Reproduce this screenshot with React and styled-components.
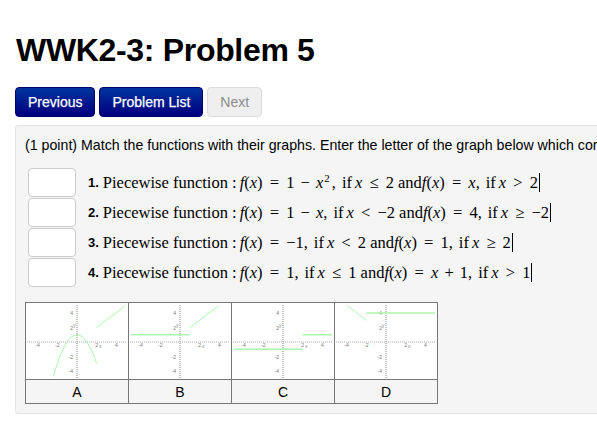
import React from 'react'
import styled, { createGlobalStyle } from 'styled-components'

const GlobalStyle = createGlobalStyle`
  html, body {
    margin: 0;
    padding: 0;
    background: #fff;
    overflow: hidden;
  }
  body {
    font-family: "Liberation Sans", Arial, sans-serif;
    color: #000;
  }
`

const Page = styled.div`
  width: 597px;
  height: 424px;
  overflow: hidden;
  padding: 33px 0 0 15px;
  box-sizing: border-box;
`

const Title = styled.h1`
  margin: 0 0 20px 1px;
  font-size: 32px;
  line-height: 34px;
  font-weight: 700;
  letter-spacing: -0.32px;
`

const Nav = styled.div`
  display: flex;
  gap: 4px;
  margin-bottom: 8px;
`

const NavButton = styled.a`
  display: block;
  box-sizing: border-box;
  height: 30px;
  padding: 0 12px;
  line-height: 28px;
  font-size: 14px;
  border-radius: 4px;
  border: 1px solid ${p => (p.$disabled ? '#dcdcdc' : '#00006e')};
  color: ${p => (p.$disabled ? '#8c8c8c' : '#fff')};
  background: ${p => (p.$disabled ? '#efefef' : 'linear-gradient(#00339c, #00007f)')};
  -webkit-text-stroke: ${p => (p.$disabled ? '0' : '0.25px #fff')};
`

const Panel = styled.div`
  box-sizing: border-box;
  width: 640px;
  height: 289px;
  padding: 11px 9px;
  background: #f5f5f5;
  border: 1px solid #e3e3e3;
  border-radius: 3px;
`

const Prompt = styled.div`
  font-size: 14.2px;
  line-height: 17px;
  white-space: nowrap;
  margin-bottom: 14px;
`

const Rows = styled.div`
  display: flex;
  flex-direction: column;
  gap: 1px;
  margin: 0 0 15px 3px;
`

const Row = styled.div`
  display: flex;
  align-items: center;
  height: 29px;
`

const AnswerBox = styled.div`
  box-sizing: border-box;
  width: 48px;
  height: 29px;
  margin-right: 12px;
  background: #fff;
  border: 1px solid #ccc;
  border-radius: 4px;
`

const Number = styled.b`
  font-size: 13px;
  margin-right: 4px;
`

const Statement = styled.span`
  font-family: "Liberation Serif", "Times New Roman", serif;
  font-size: 16.5px;
  white-space: nowrap;
  border-right: 1px solid #000;
  padding-right: 1px;
  line-height: 19px;
  sup {
    font-size: 11px;
    line-height: 0;
    margin: 0 2px 0 1px;
  }
`

const Rel = styled.span`
  margin: 0 ${p => p.$gap ?? 2}px;
`

const Func = styled.span`
  margin-left: ${p => p.$left || 0}px;
`

const If = styled.span`
  margin: 0 3px 0 6px;
`

const GraphTable = styled.table`
  border-collapse: collapse;
  border: 1px solid #333;
  font-size: 14px;
  td {
    border: 1px solid #777;
    padding: 0;
    text-align: center;
  }
`

const GraphCell = styled.td`
  width: 102px;
  height: 76px;
  background: #fff;
  line-height: 0;
`

const LetterCell = styled.td`
  height: 23px;
`

const sx = x => 51 + x * 9.85
const sy = y => 39 - y * 7.25

const xLabels = [-4, -2, 2, 4]
const yLabels = [4, 2, -2, -4]

const Graph = ({ segments }) => (
  <svg width="102" height="76" viewBox="0 0 102 76">
    <line x1="1" x2="101" y1="39" y2="39" stroke="#bbb" strokeWidth="1.6" strokeDasharray="0.8 1.2" />
    <line x1="51" x2="51" y1="2" y2="76" stroke="#c4c4c4" strokeWidth="2.2" strokeDasharray="1 1" />
    {xLabels.map(v => (
      <text key={v} x={sx(v)} y="44" fontSize="5" textAnchor="middle" fill="#777" fontFamily="Liberation Sans">{v}</text>
    ))}
    {yLabels.map(v => (
      <text key={v} x="47" y={sy(v) + 2} fontSize="5" textAnchor="end" fill="#777" fontFamily="Liberation Sans">{v}</text>
    ))}
    <text x="73" y="45" fontSize="5" fill="#888" fontFamily="Liberation Sans">x</text>
    <text x="47" y="24" fontSize="5" fill="#888" fontFamily="Liberation Sans">y</text>
    {segments.map((s, i) => (
      <path
        key={i}
        d={s.points.map((p, j) => `${j ? 'L' : 'M'}${sx(p[0])} ${sy(p[1])}`).join(' ')}
        fill="none"
        stroke="#aef5ae"
        strokeWidth={s.thick ? 1.6 : 1}
      />
    ))}
  </svg>
)

const parabola = []
for (let x = -2.4; x <= 2.001; x += 0.2) parabola.push([x, 1 - x * x])

const graphs = [
  { letter: 'A', segments: [{ points: parabola }, { points: [[2, 2], [4.9, 5]] }] },
  { letter: 'B', segments: [{ points: [[-5, 1], [1, 1]], thick: true }, { points: [[1, 2], [3.93, 5]] }] },
  { letter: 'C', segments: [{ points: [[-5, -1], [2, -1]], thick: true }, { points: [[2, 1], [5, 1]], thick: true }] },
  { letter: 'D', segments: [{ points: [[-3.93, 5], [-2, 3]] }, { points: [[-2, 4], [5, 4]], thick: true }] },
]

const F = ({ left }) => (
  <Func $left={left}><i>f</i>(<i>x</i>)<Rel $gap={3}> = </Rel></Func>
)
const X = () => <i>x</i>

const App = () => (
  <>
    <GlobalStyle />
    <Page>
      <Title>WWK2-3: Problem 5</Title>
      <Nav>
        <NavButton>Previous</NavButton>
        <NavButton>Problem List</NavButton>
        <NavButton $disabled>Next</NavButton>
      </Nav>
      <Panel>
        <Prompt>(1 point) Match the functions with their graphs. Enter the letter of the graph below which corresponds to the function.</Prompt>
        <Rows>
          <Row>
            <AnswerBox />
            <Number>1.</Number>
            <Statement>
              Piecewise function :<F left={3} />1<Rel> − </Rel><X /><sup>2</sup>,<If>if</If><X /><Rel $gap={3}> ≤ </Rel>2 and<F /><X />,<If>if</If><X /><Rel $gap={3}> &gt; </Rel>2
            </Statement>
          </Row>
          <Row>
            <AnswerBox />
            <Number>2.</Number>
            <Statement>
              Piecewise function :<F left={3} />1<Rel> − </Rel><X />,<If>if</If><X /><Rel $gap={3}> &lt; </Rel>−2 and<F />4,<If>if</If><X /><Rel $gap={3}> ≥ </Rel>−2
            </Statement>
          </Row>
          <Row>
            <AnswerBox />
            <Number>3.</Number>
            <Statement>
              Piecewise function :<F left={3} />−1,<If>if</If><X /><Rel $gap={3}> &lt; </Rel>2 and<F />1,<If>if</If><X /><Rel $gap={3}> ≥ </Rel>2
            </Statement>
          </Row>
          <Row>
            <AnswerBox />
            <Number>4.</Number>
            <Statement>
              Piecewise function :<F left={3} />1,<If>if</If><X /><Rel $gap={3}> ≤ </Rel>1 and<F /><X /><Rel> + </Rel>1,<If>if</If><X /><Rel $gap={3}> &gt; </Rel>1
            </Statement>
          </Row>
        </Rows>
        <GraphTable>
          <tbody>
            <tr>
              {graphs.map(g => (
                <GraphCell key={g.letter}><Graph segments={g.segments} /></GraphCell>
              ))}
            </tr>
            <tr>
              {graphs.map(g => (
                <LetterCell key={g.letter}>{g.letter}</LetterCell>
              ))}
            </tr>
          </tbody>
        </GraphTable>
      </Panel>
    </Page>
  </>
)

export default App
